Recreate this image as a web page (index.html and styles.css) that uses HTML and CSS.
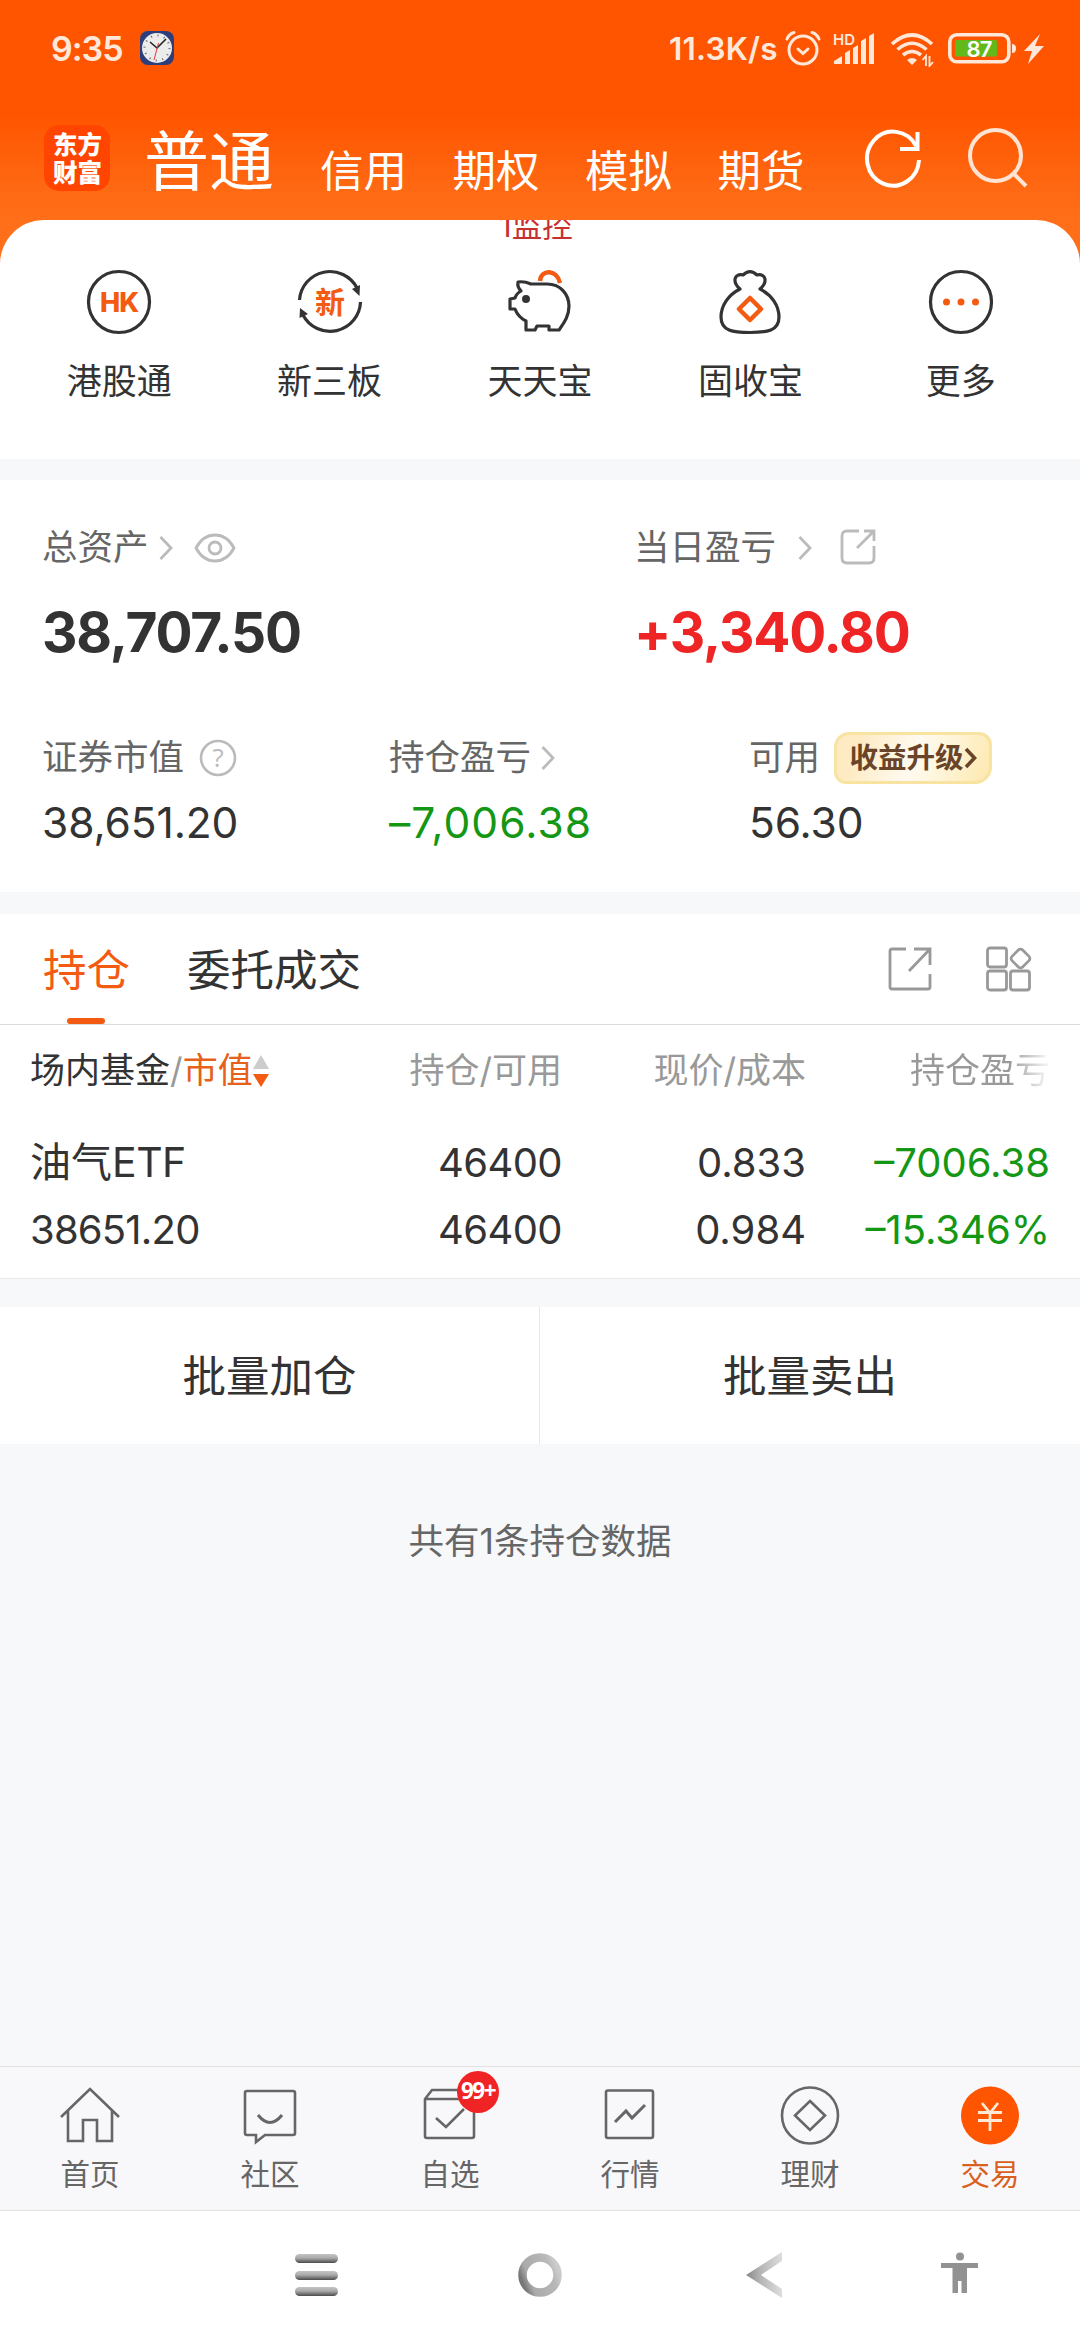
FILE: index.html
```html
<!DOCTYPE html>
<html lang="zh-CN">
<head>
  <meta charset="UTF-8">
  <title>东方财富 - 交易</title>
  <link rel="stylesheet" href="styles.css">
</head>
<body>
  <div class="header">
    <div class="status">
      <span class="time">9:35</span>
      <svg class="clock" width="34" height="34" viewBox="0 0 34 34">
        <rect width="34" height="34" rx="8" fill="#2c3f7c"/>
        <circle cx="17" cy="17" r="15" fill="#ececec"/>
        <circle cx="17" cy="17" r="12.5" fill="none" stroke="#777" stroke-width="2" stroke-dasharray="1.2 5.345"/>
        <path d="M10 11L17 17L26 8" fill="none" stroke="#222" stroke-width="1.6"/>
        <path d="M18.5 12L14 29" stroke="#e03a3a" stroke-width="1"/>
      </svg>
      <span class="speed">11.3K/s</span>
      <svg class="st-alarm" width="36" height="36" viewBox="0 0 36 36" fill="none" stroke="#ffe8da" stroke-width="3" stroke-linecap="round">
        <circle cx="18" cy="20" r="14"/>
        <path d="M2 9Q4 4 9 2.500M34 9Q32 4 27 2.500M13 19L18 23.500L23 19"/>
      </svg>
      <svg class="st-signal" width="42" height="34" viewBox="0 0 42 34" fill="#ffe8da">
        <text x="0" y="13" class="hd">HD</text>
        <path d="M1 32V29L9 24V32ZM12 32V21L17 18V32ZM20 32V16L25 13V32ZM28 32V9L33 6V32ZM36 32V4L41 1V32Z"/>
      </svg>
      <svg class="st-wifi" width="44" height="36" viewBox="0 0 44 36" fill="none" stroke="#ffe8da" stroke-width="3.600">
        <path d="M2 13Q22 -5 42 13M7.500 18.500Q22 6 36.500 18.500M13 24Q22 17 31 24"/>
        <path d="M17 29Q22 25 27 29L22 34Z" fill="#ffe8da" stroke="none"/>
        <path d="M36 35V25L32.500 29M39.500 25V35L43 31" stroke-width="1.800"/>
      </svg>
      <svg class="st-battery" width="70" height="32" viewBox="0 0 70 32">
        <rect x="1.800" y="1.800" width="59" height="27" rx="7" fill="none" stroke="#ffe8da" stroke-width="3.600"/>
        <rect x="7" y="7" width="42" height="16.500" rx="2" fill="#62b919"/>
        <path d="M64 11Q68 11 68 15.500T64 20Z" fill="#ffe8da"/>
        <text x="31" y="23.500" text-anchor="middle" class="pct">87</text>
      </svg>
      <svg class="st-bolt" width="20" height="30" viewBox="0 0 20 30"><path d="M16 0L0 17H8L4 30L20 12H11Z" fill="#ffe8da"/></svg>
    </div>
    <div class="nav">
      <div class="logo"><span>东方</span><span>财富</span></div>
      <span class="nav-on">普通</span>
      <span class="nav-item">信用</span>
      <span class="nav-item">期权</span>
      <span class="nav-item">模拟</span>
      <span class="nav-item">期货</span>
      <svg class="refresh" width="60" height="60" viewBox="0 0 60 60" fill="none" stroke="#fff" stroke-width="4">
        <path d="M52 17A26 27 0 1 0 55 31"/>
        <path d="M53.500 3V20H36"/>
      </svg>
      <svg class="search" width="60" height="62" viewBox="0 0 60 62" fill="none" stroke="#ffe3d3" stroke-width="4">
        <circle cx="27.500" cy="28.500" r="25.500"/>
        <path d="M45 46L58 59"/>
      </svg>
    </div>
  </div>

  <div class="quick-wrap">
    <div class="quick">
      <div class="cut"><span>1监控</span></div>
      <div class="quick-row">
        <div class="quick-item">
          <svg width="66" height="66" viewBox="0 0 66 66">
            <circle cx="33" cy="33" r="30.500" fill="none" stroke="#333" stroke-width="3.200"/>
            <text x="33" y="43" text-anchor="middle" class="hk">HK</text>
          </svg>
          <span>港股通</span>
        </div>
        <div class="quick-item">
          <svg width="66" height="66" viewBox="0 0 66 66">
            <path d="M2.500 31A30.500 30.500 0 0 1 60 19M63.500 33A30.500 30.500 0 0 1 6 46" fill="none" stroke="#333" stroke-width="3.200"/>
            <path d="M55 20L63 16L62.500 27ZM3 39L2.500 49L11 45Z" fill="#333"/>
            <text x="33" y="44" text-anchor="middle" class="xin">新</text>
          </svg>
          <span>新三板</span>
        </div>
        <div class="quick-item">
          <svg width="66" height="66" viewBox="0 0 66 66" fill="none" stroke="#333" stroke-width="3.200" stroke-linejoin="round">
            <path d="M33 12C34 0 50 0 53 14" stroke="#f35b13" stroke-width="4.500"/>
            <path d="M11 13Q17 12 24 15H40C54 15 62 26 62 37C62 48 56 55 52 61H42V57H30L28 61H19V52Q11 48 8 40H3V30L8 29Q9 25 14 22Q10 18 11 13Z"/>
            <circle cx="19" cy="30" r="2.400" fill="#333"/>
          </svg>
          <span>天天宝</span>
        </div>
        <div class="quick-item">
          <svg width="66" height="66" viewBox="0 0 66 66" fill="none" stroke="#333" stroke-width="3.200" stroke-linejoin="round">
            <path d="M23 20C15 13 17 4 26 6Q33 -1 40 6C49 4 51 13 43 20C55 26 62 37 62 48C62 62 50 63.500 33 63.500S4 62 4 48C4 37 11 26 23 20Z"/>
            <path d="M33 29L44 40L33 51L22 40Z" stroke="#f35b13" stroke-width="4.500"/>
          </svg>
          <span>固收宝</span>
        </div>
        <div class="quick-item">
          <svg width="66" height="66" viewBox="0 0 66 66">
            <circle cx="33" cy="33" r="30.500" fill="none" stroke="#333" stroke-width="3.200"/>
            <g fill="#f35b13"><circle cx="18.500" cy="33" r="3.500"/><circle cx="33" cy="33" r="3.500"/><circle cx="47.500" cy="33" r="3.500"/></g>
          </svg>
          <span>更多</span>
        </div>
      </div>
    </div>
  </div>

  <div class="assets">
    <div class="assets-top">
      <div class="asset">
        <div class="label">总资产
          <svg class="arrow arrow-1" width="14" height="26" viewBox="0 0 14 26"><path d="M1.500 2L12 13L1.500 24"/></svg>
          <svg class="eye" width="42" height="30" viewBox="0 0 42 30" fill="none" stroke="#bbb" stroke-width="2.800">
            <path d="M2 15Q9 2 21 2T40 15Q33 28 21 28T2 15Z"/><circle cx="21" cy="15" r="6"/>
          </svg>
        </div>
        <div class="big">38,707.50</div>
      </div>
      <div class="asset">
        <div class="label">当日盈亏
          <svg class="arrow arrow-2" width="14" height="26" viewBox="0 0 14 26"><path d="M1.500 2L12 13L1.500 24"/></svg>
          <svg class="share" width="36" height="36" viewBox="0 0 36 36" fill="none" stroke="#bbb" stroke-width="2.800">
            <path d="M19 2H7Q2 2 2 7V29Q2 34 7 34H29Q34 34 34 29V17"/><path d="M24 2H34V12M34 2L17 19"/>
          </svg>
        </div>
        <div class="big red">+3,340.80</div>
      </div>
    </div>
    <div class="assets-sub">
      <div>
        <div class="label">证券市值
          <svg class="help" width="38" height="38" viewBox="0 0 38 38">
            <circle cx="19" cy="19" r="17" fill="none" stroke="#bbb" stroke-width="2.600"/>
            <text x="19" y="28" text-anchor="middle">?</text>
          </svg>
        </div>
        <div class="val">38,651.20</div>
      </div>
      <div>
        <div class="label">持仓盈亏
          <svg class="arrow arrow-1" width="14" height="26" viewBox="0 0 14 26"><path d="M1.500 2L12 13L1.500 24"/></svg>
        </div>
        <div class="val green"><i>–</i>7,006.38</div>
      </div>
      <div>
        <div class="label">可用
          <span class="upgrade">收益升级<svg width="13" height="22" viewBox="0 0 13 22"><path d="M2 2L10.500 11L2 20" fill="none" stroke="#6a4428" stroke-width="3.600"/></svg></span>
        </div>
        <div class="val">56.30</div>
      </div>
    </div>
  </div>

  <div class="hold">
    <div class="tabs">
      <span class="tab tab-on">持仓</span>
      <span class="tab">委托成交</span>
      <svg class="t-share" width="44" height="44" viewBox="0 0 44 44" fill="none" stroke="#999" stroke-width="2.800">
        <path d="M18 2H4Q2 2 2 4V40Q2 42 4 42H40Q42 42 42 40V27"/><path d="M26 2H42V18M42 2L21 24"/>
      </svg>
      <svg class="t-grid" width="46" height="46" viewBox="0 0 46 46" fill="none" stroke="#999" stroke-width="2.800">
        <rect x="1.500" y="2" width="19" height="19" rx="2.500"/>
        <rect x="1.500" y="25" width="19" height="19" rx="2.500"/>
        <rect x="24.500" y="25" width="19" height="19" rx="2.500"/>
        <rect x="27" y="5" width="15" height="15" rx="3" transform="rotate(45 34.500 12.500)"/>
      </svg>
    </div>
    <div class="row row-head">
      <span class="c1"><b>场内基金</b>/<em>市值</em><svg width="16" height="34" viewBox="0 0 16 34"><path d="M8 1L16 15H0Z" fill="#ccc"/><path d="M8 33L0 20H16Z" fill="#f35b13"/></svg></span>
      <span class="c2">持仓/可用</span>
      <span class="c3">现价/成本</span>
      <span class="c4 fade">持仓盈亏</span>
    </div>
    <div class="row row-1">
      <span class="c1">油气<span class="etf">ETF</span></span>
      <span class="c2">46400</span>
      <span class="c3">0.833</span>
      <span class="c4 green"><i>–</i>7006.38</span>
    </div>
    <div class="row row-2">
      <span class="c1 mv">38651.20</span>
      <span class="c2">46400</span>
      <span class="c3">0.984</span>
      <span class="c4 green"><i>–</i>15.346%</span>
    </div>
  </div>

  <div class="batch">
    <div>批量加仓</div>
    <div>批量卖出</div>
  </div>
  <div class="total">共有1条持仓数据</div>

  <div class="tabbar">
    <div class="bar-item">
      <svg width="60" height="64" viewBox="0 0 60 64" fill="none" stroke="#666" stroke-width="2.600">
        <path d="M1 33L30 5L59 33M8 27V57H23V36H37V57H52V27"/>
      </svg>
      <span>首页</span>
    </div>
    <div class="bar-item">
      <svg width="60" height="64" viewBox="0 0 60 64" fill="none" stroke="#666" stroke-width="2.600">
        <path d="M7 7H53Q55 7 55 9V49Q55 51 53 51H25L16 58V51H7Q5 51 5 49V9Q5 7 7 7Z"/>
        <path d="M18 31Q30 46 42 31" stroke-width="3"/>
      </svg>
      <span>社区</span>
    </div>
    <div class="bar-item">
      <svg width="60" height="64" viewBox="0 0 60 64" fill="none" stroke="#666" stroke-width="2.600">
        <path d="M5 15L12 6H46L54 15V52Q54 54 52 54H7Q5 54 5 52ZM5 15H54M16 34L26 43L44 25"/>
      </svg>
      <i class="badge">99+</i>
      <span>自选</span>
    </div>
    <div class="bar-item">
      <svg width="60" height="64" viewBox="0 0 60 64" fill="none" stroke="#666" stroke-width="2.600">
        <rect x="6" y="6.500" width="47" height="47.500" rx="2"/>
        <path d="M15 38L26 27L32 34L45 21" stroke-width="3"/>
      </svg>
      <span>行情</span>
    </div>
    <div class="bar-item">
      <svg width="60" height="64" viewBox="0 0 60 64" fill="none" stroke="#666" stroke-width="2.600">
        <circle cx="30" cy="31.500" r="28"/>
        <path d="M30 17L45 31.500L30 46L15 31.500Z"/>
      </svg>
      <span>理财</span>
    </div>
    <div class="bar-item bar-on">
      <svg width="60" height="64" viewBox="0 0 60 64" fill="none" stroke="#ffe8d6" stroke-width="2.800">
        <circle cx="30" cy="31.500" r="29" fill="#ff5500" stroke="none"/>
        <path d="M22 19L30 29L38 19M18 28.500H42M18 36.500H42M30 28V47"/>
      </svg>
      <span>交易</span>
    </div>
  </div>

  <div class="sysnav">
    <svg class="s-menu" width="44" height="44" viewBox="0 0 44 44">
      <defs>
        <linearGradient id="bar" x1="0" y1="0" x2="0" y2="1"><stop offset="0" stop-color="#c4c4c4"/><stop offset=".45" stop-color="#aaa"/><stop offset="1" stop-color="#4a4a4a"/></linearGradient>
        <linearGradient id="ring" x1="0" y1=".7" x2="1" y2=".3"><stop offset="0" stop-color="#777"/><stop offset=".2" stop-color="#aaa"/><stop offset=".8" stop-color="#b8b8b8"/><stop offset="1" stop-color="#ccc"/></linearGradient>
        <linearGradient id="back" x1="0" y1="0" x2="1" y2="0"><stop offset="0" stop-color="#888"/><stop offset=".4" stop-color="#b5b5b5"/><stop offset="1" stop-color="#ddd"/></linearGradient>
      </defs>
      <g fill="url(#bar)"><rect y="1" width="43" height="9" rx="4.500"/><rect y="18" width="43" height="9" rx="4.500"/><rect y="34" width="43" height="9" rx="4.500"/></g>
    </svg>
    <svg class="s-home" width="44" height="44" viewBox="0 0 44 44"><circle cx="22" cy="22" r="17.500" fill="none" stroke="url(#ring)" stroke-width="8.500"/></svg>
    <svg class="s-back" width="36" height="46" viewBox="0 0 36 46"><path d="M36 0V9L15 23L36 37V46L0 23Z" fill="url(#back)"/></svg>
    <svg class="s-acc" width="38" height="42" viewBox="0 0 38 42" fill="#929292"><circle cx="19" cy="4.500" r="4"/><path d="M0 11H37V16H26V41H20.500V29H17V41H11.500V16H0Z"/></svg>
  </div>
</body>
</html>
```

FILE: styles.css
```css
* { box-sizing: border-box; }
body { margin: 0; width: 1080px; height: 2340px; overflow: hidden; display: flex; flex-direction: column; background: #f7f8fa; color: #333; font-family: Inter, "Noto Sans CJK SC", sans-serif; font-size: 35px; }
svg { display: block; flex: none; }
i, em { font-style: normal; }
b { font-weight: normal; }
.red { color: #ef2525; }
.green { color: #149714; }

/* header */
.header { height: 220px; flex: none; background: linear-gradient(#ff5500 0, #ff5500 115px, #ff6a14 195px, #ff6e18 220px); color: #fff; }
.status { height: 98px; padding-left: 51px; display: flex; align-items: center; color: #ffe8da; }
.time { width: 89px; font: 600 34px/40px Inter, sans-serif; letter-spacing: -1px; }
.speed { margin-left: 495px; width: 116px; font: 600 31.5px/40px Inter, sans-serif; letter-spacing: .2px; white-space: nowrap; }
.clock { margin-top: -2px; }
.st-alarm { margin-top: -2px; }
.st-signal { margin-left: 12px; }
.st-wifi { margin-left: 15px; }
.st-battery { margin-left: 14px; }
.st-bolt { margin-left: 6px; }
.hd { font: 600 15px Inter, sans-serif; }
.pct { font: 600 22px Inter, sans-serif; fill: #fff; letter-spacing: -1px; }
.nav { height: 122px; padding-left: 44px; display: flex; }
.logo { width: 66px; height: 66px; margin-top: 27px; padding: 5px 0 0 1px; border-radius: 15px; background: #ff4500; font: 900 24.5px/28px "Noto Sans CJK SC", sans-serif; text-align: center; }
.logo span { display: block; }
.nav-on { margin: 16px 46px 0 34px; width: 130px; font-size: 65px; line-height: 96px; }
.nav-item { width: 132.500px; font-size: 43.500px; line-height: 66px; margin-top: 40px; }
.refresh { margin: 31px 0 0 14px; }
.search { margin: 29px 0 0 44px; }

/* shortcuts */
.quick-wrap { height: 239px; flex: none; background: #ff6e18; }
.quick { height: 239px; padding: 0 14px; border-radius: 44px 44px 0 0; background: #fff; overflow: hidden; }
.cut { height: 20px; overflow: hidden; color: #c8302e; font-size: 30.500px; display: flex; align-items: flex-end; justify-content: center; padding-right: 8px; }
.cut span { line-height: 28px; }
.quick-row { display: flex; padding-top: 29px; }
.quick-item { width: 210.500px; display: flex; flex-direction: column; align-items: center; }
.quick-item span { margin-top: 21px; font-size: 35px; line-height: 50px; color: #333; }
.hk { font: 800 27px Inter, sans-serif; fill: #f35b13; letter-spacing: -1px; }
.xin { font: bold 30px "Noto Sans CJK SC", sans-serif; fill: #f35b13; }

/* assets */
.assets { height: 412px; margin-top: 21px; padding-left: 42px; flex: none; background: #fff; }
.label { height: 48px; line-height: 48px; display: flex; align-items: center; color: #666; font-size: 35.500px; white-space: nowrap; }
.arrow path { fill: none; stroke: #bbb; stroke-width: 2.800px; }
.arrow-1 { margin-left: 10px; }
.arrow-2 { margin-left: 22px; }
.eye { margin-left: 21px; }
.share { margin-left: 28px; margin-top: -3px; }
.help { margin-left: 15px; }
.help text { font: 26px "Open Sans", sans-serif; fill: #bbb; }
.assets-top { display: flex; padding-top: 44px; height: 254px; }
.asset:first-child { width: 592px; }
.big { margin-top: 24px; font-weight: bold; font-size: 55px; line-height: 72px; letter-spacing: -1.200px; }
.assets-sub { display: flex; }
.assets-sub > div:first-child { width: 347px; }
.assets-sub > div:nth-child(2) { width: 360px; }
.val { margin-top: 11px; font-size: 42.500px; line-height: 60px; letter-spacing: -.1px; }
.val.green { letter-spacing: 1.100px; }
.upgrade { width: 158px; height: 52px; margin-left: 14px; display: flex; align-items: center; justify-content: center; border: 3px solid #f9e3a0; border-radius: 15px 13px 17px 12px; background: linear-gradient(110deg, #feebc4 15%, #fffaf0 50%, #fff6df 65%, #fde8ae); color: #6a4428; font-weight: bold; font-size: 28.500px; }

/* holdings */
.hold { height: 365px; margin-top: 22px; flex: none; background: #fff; border-bottom: 1px solid #e8e8e8; }
.tabs { height: 111px; display: flex; padding-left: 43px; border-bottom: 1px solid #dcdcdc; }
.tab { position: relative; font-size: 43.500px; line-height: 112px; margin-right: 57px; }
.tab-on { color: #f35b13; }
.tab-on:after { content: ""; position: absolute; left: 24px; bottom: 0; width: 38px; height: 6px; border-radius: 3px; background: #f35b13; }
.t-share { margin: 33px 0 0 470px; }
.t-grid { margin: 32px 0 0 54px; }
.row { display: flex; padding: 0 30px; font-size: 40px; height: 67px; line-height: 67px; white-space: nowrap; }
.c1 { width: 270px; }
.c2 { width: 262px; text-align: right; }
.c3 { width: 244px; text-align: right; }
.c4 { width: 244px; text-align: right; }
.row-1 .c2, .row-2 .c2 { letter-spacing: -.6px; }
.row-head { height: 104px; line-height: 91px; font-size: 35px; color: #999; }
.row-head .c1 { display: flex; align-items: center; height: 91px; }
.row-head b { color: #333; }
.row-head em { color: #e5611c; }
.fade { background: linear-gradient(90deg, #999 83%, #f0f0f0 98%); -webkit-background-clip: text; background-clip: text; color: transparent; }
.row-1 .c1 { font-size: 41px; }
.etf { letter-spacing: -.5px; }
.mv { letter-spacing: -.8px; }

/* batch actions */
.batch { display: flex; margin-top: 28px; height: 137px; flex: none; background: #fff; }
.batch div { width: 540px; text-align: center; font-size: 43.500px; line-height: 139px; }
.batch div:first-child { border-right: 1px solid #e8e8e8; }
.total { margin-top: 72px; text-align: center; font-size: 35.500px; line-height: 52px; color: #666; }

/* bottom bar */
.tabbar { margin-top: auto; height: 145px; flex: none; display: flex; background: #f8f8fb; border-top: 1px solid #e2e2e2; border-bottom: 1px solid #e2e2e2; }
.bar-item { position: relative; width: 180px; padding-top: 17px; display: flex; flex-direction: column; align-items: center; color: #666; }
.bar-item span { margin-top: 6px; font-size: 29.500px; line-height: 40px; }
.bar-on span { color: #d9601f; }
.badge { position: absolute; left: 97px; top: 4px; width: 42px; height: 42px; border-radius: 21px; background: #f02424; color: #fff; font: bold 22.5px/40px "Open Sans", sans-serif; letter-spacing: -1.500px; text-align: center; }
.sysnav { height: 129px; flex: none; display: flex; padding: 42px 0 0 295px; background: #fff; }
.s-home { margin-left: 179px; }
.s-back { margin-left: 184px; margin-top: -1px; }
.s-acc { margin-left: 159px; margin-top: -1px; }
```
